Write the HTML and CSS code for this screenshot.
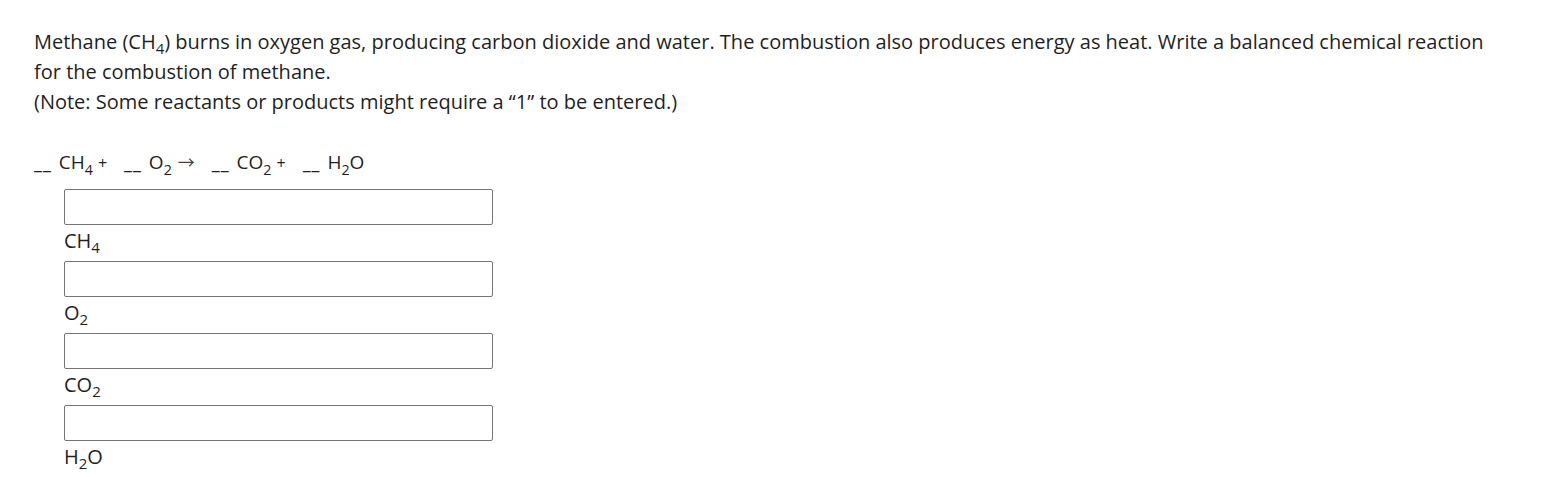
FILE: index.html
```html
<!DOCTYPE html>
<html>
<head>
<meta charset="utf-8">
<link rel="stylesheet" href="styles.css">
</head>
<body>
<div class="question">
  <p class="prompt">Methane (CH<sub>4</sub>) burns in oxygen gas, producing carbon dioxide and water. The combustion also produces energy as heat. Write a balanced chemical reaction for the combustion of methane.<br>(Note: Some reactants or products might require a “1” to be entered.)</p>
  <div class="equation">
    <span class="term"><span class="blank">__</span>CH<sub>4</sub></span><span class="op">+</span>
    <span class="term"><span class="blank">__</span>O<sub>2</sub></span><span class="op arrow">→</span>
    <span class="term"><span class="blank">__</span>CO<sub>2</sub></span><span class="op">+</span>
    <span class="term"><span class="blank">__</span>H<sub>2</sub>O</span>
  </div>
  <div class="answers">
    <div class="field">
      <input class="box" type="text" aria-label="CH4">
      <div class="label">CH<sub>4</sub></div>
    </div>
    <div class="field">
      <input class="box" type="text" aria-label="O2">
      <div class="label">O<sub>2</sub></div>
    </div>
    <div class="field">
      <input class="box" type="text" aria-label="CO2">
      <div class="label">CO<sub>2</sub></div>
    </div>
    <div class="field">
      <input class="box" type="text" aria-label="H2O">
      <div class="label">H<sub>2</sub>O</div>
    </div>
  </div>
</div>
</body>
</html>
```
FILE: styles.css
```css
html, body {
  margin: 0;
  padding: 0;
  background: #fff;
}
body {
  font-family: "Open Sans", "Noto Sans", sans-serif;
  color: #1f1f1f;
}
.question {
  padding: 27px 34px 0 34px;
}
.prompt {
  margin: 0;
  width: 1480px;
  font-size: 20px;
  line-height: 30px;
}
sub {
  font-size: 0.75em;
  line-height: 0;
  vertical-align: -0.32em;
}
.equation {
  margin-top: 33px;
  height: 24px;
  line-height: 24px;
  font-size: 19px;
  white-space: nowrap;
  display: flex;
  align-items: baseline;
}
.equation sub {
  vertical-align: -0.4em;
}
.equation .blank {
  font-size: 18px;
  letter-spacing: 1px;
  margin-right: 7px;
}
.equation .op {
  font-size: 16px;
  margin: 0 17px 0 5px;
}
.equation .op.arrow {
  font-family: "Noto Sans CJK SC", sans-serif;
  font-size: 17px;
  color: #444;
  margin: 0 17px 0 6px;
}
.answers {
  margin-top: 15px;
  padding-left: 30px;
  display: flex;
  flex-direction: column;
}
.field {
  display: flex;
  flex-direction: column;
}
.box {
  box-sizing: border-box;
  width: 429px;
  height: 36px;
  margin: 0;
  border: 1px solid #767676;
  border-radius: 2px;
  background: #fff;
  padding: 0 6px;
  font-family: inherit;
}
.label {
  margin: 4px 0 8px 0;
  font-size: 20px;
  line-height: 24px;
}
```
